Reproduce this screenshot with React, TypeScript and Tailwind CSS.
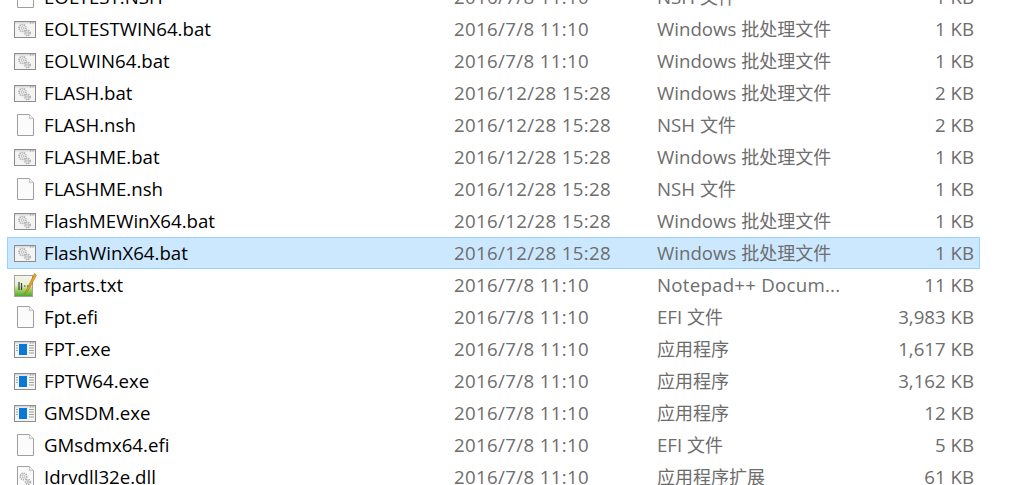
import React from "react";

type IconKind = "bat" | "file" | "exe" | "npp" | "dll";

interface FileRow {
  name: string;
  date: string;
  type: string;
  size: string;
  icon: IconKind;
  selected?: boolean;
}

const BAT = "Windows 批处理文件";

const rows: FileRow[] = [
  { name: "EOLTEST.NSH", date: "2016/7/8 11:10", type: "NSH 文件", size: "1 KB", icon: "file" },
  { name: "EOLTESTWIN64.bat", date: "2016/7/8 11:10", type: BAT, size: "1 KB", icon: "bat" },
  { name: "EOLWIN64.bat", date: "2016/7/8 11:10", type: BAT, size: "1 KB", icon: "bat" },
  { name: "FLASH.bat", date: "2016/12/28 15:28", type: BAT, size: "2 KB", icon: "bat" },
  { name: "FLASH.nsh", date: "2016/12/28 15:28", type: "NSH 文件", size: "2 KB", icon: "file" },
  { name: "FLASHME.bat", date: "2016/12/28 15:28", type: BAT, size: "1 KB", icon: "bat" },
  { name: "FLASHME.nsh", date: "2016/12/28 15:28", type: "NSH 文件", size: "1 KB", icon: "file" },
  { name: "FlashMEWinX64.bat", date: "2016/12/28 15:28", type: BAT, size: "1 KB", icon: "bat" },
  { name: "FlashWinX64.bat", date: "2016/12/28 15:28", type: BAT, size: "1 KB", icon: "bat", selected: true },
  { name: "fparts.txt", date: "2016/7/8 11:10", type: "Notepad++ Docum...", size: "11 KB", icon: "npp" },
  { name: "Fpt.efi", date: "2016/7/8 11:10", type: "EFI 文件", size: "3,983 KB", icon: "file" },
  { name: "FPT.exe", date: "2016/7/8 11:10", type: "应用程序", size: "1,617 KB", icon: "exe" },
  { name: "FPTW64.exe", date: "2016/7/8 11:10", type: "应用程序", size: "3,162 KB", icon: "exe" },
  { name: "GMSDM.exe", date: "2016/7/8 11:10", type: "应用程序", size: "12 KB", icon: "exe" },
  { name: "GMsdmx64.efi", date: "2016/7/8 11:10", type: "EFI 文件", size: "5 KB", icon: "file" },
  { name: "Idrvdll32e.dll", date: "2016/7/8 11:10", type: "应用程序扩展", size: "61 KB", icon: "dll" },
];

const Gear = ({ cx, cy, r }: { cx: number; cy: number; r: number }) => (
  <g>
    <circle cx={cx} cy={cy} r={r} fill="none" stroke="#adadad" strokeWidth="1.7" strokeDasharray="1.3 0.8" />
    <circle cx={cx} cy={cy} r={r * 0.4} fill="#f4f4f4" stroke="#a8a8a8" strokeWidth="0.7" />
  </g>
);

const Page = () => (
  <>
    <path d="M3.5 0.5H15.5L19.5 4.5V21.5H3.5Z" fill="#fbfbfb" stroke="#9e9e9e" />
    <path d="M15.5 0.5V4.5H19.5" fill="#efefef" stroke="#c4c4c4" />
  </>
);

const Window = () => (
  <>
    <rect x="0.5" y="3.5" width="21" height="16" fill="#f4f4f4" stroke="#8c8c8c" />
    <rect x="1" y="4" width="20" height="1.6" fill="#dcdcdc" />
    <rect x="16" y="4.2" width="1.2" height="1.2" fill="#9a9a9a" />
    <rect x="18.5" y="4.2" width="1.2" height="1.2" fill="#9a9a9a" />
  </>
);

const FileIcon = ({ kind }: { kind: IconKind }) => {
  if (kind === "file") {
    return (
      <svg width="22" height="22" viewBox="0 0 22 22">
        <Page />
      </svg>
    );
  }
  if (kind === "dll") {
    return (
      <svg width="22" height="22" viewBox="0 0 22 22">
        <Page />
        <Gear cx={9.5} cy={10.5} r={3.2} />
        <Gear cx={14} cy={16} r={2.4} />
      </svg>
    );
  }
  if (kind === "bat") {
    return (
      <svg width="22" height="22" viewBox="0 0 22 22">
        <Window />
        <Gear cx={8.5} cy={10} r={3.4} />
        <Gear cx={13.5} cy={15} r={2.6} />
      </svg>
    );
  }
  if (kind === "exe") {
    return (
      <svg width="22" height="22" viewBox="0 0 22 22">
        <Window />
        <rect x="5" y="6" width="8" height="11" fill="#0a78d7" />
        <path d="M2 7.5H4M2 10H4M2 12.5H4M15 7.5H20M15 10H20M15 12.5H20M15 15H20" stroke="#a0a0a0" strokeWidth="1" />
      </svg>
    );
  }
  return (
    <svg width="24" height="24" viewBox="0 0 24 24" className="-ml-[1px] shrink-0">
      <defs>
        <linearGradient id="npp" x1="0" y1="0" x2="0" y2="1">
          <stop offset="0" stopColor="#f6f6f0" />
          <stop offset="0.45" stopColor="#e6efd2" />
          <stop offset="0.7" stopColor="#9ed05f" />
          <stop offset="1" stopColor="#46a82c" />
        </linearGradient>
      </defs>
      <rect x="1.5" y="2.5" width="18" height="21" fill="url(#npp)" stroke="#a3a396" />
      <path d="M6 9V17M8.5 10V17M11 13H12.5M14 13H15.5" stroke="#3f3f3f" strokeWidth="1.2" />
      <path d="M21.5 0.5L13.5 17L11.5 21L15 18L23.5 2Z" fill="#eba81f" stroke="#a66c10" strokeWidth="0.6" />
    </svg>
  );
};

// the CJK part of a type name runs a little narrower than the latin part
const TypeName = ({ text }: { text: string }) => (
  <>
    {text.split(/([\u4e00-\u9fff]+)/).map((part, i) =>
      i % 2 === 1 ? (
        <span key={i} className="text-[18px]">
          {part}
        </span>
      ) : (
        <span key={i}>{part}</span>
      ),
    )}
  </>
);

export default function App() {
  return (
    <div className="h-[485px] w-[1035px] overflow-hidden bg-white font-['Open_Sans','Noto_Sans_CJK_SC',sans-serif] text-[18.67px]">
      <div className="-mt-[19px] flex flex-col pl-[7px]">
        {rows.map((row) => (
          <div
            key={row.name}
            className={`box-border flex h-[32px] w-[973px] items-center border ${
              row.selected ? "border-[#99d1ff] bg-[#cce8ff]" : "border-transparent"
            }`}
          >
            <div className="ml-[6px] flex w-[24px] shrink-0 items-center">
              <FileIcon kind={row.icon} />
            </div>
            <div className="ml-[6px] w-[410px] shrink-0 whitespace-nowrap text-black">{row.name}</div>
            <div className="w-[203px] shrink-0 whitespace-nowrap tracking-[0.35px] text-[#6d6d6d]">{row.date}</div>
            <div
              className={`w-[200px] shrink-0 whitespace-nowrap text-[#6d6d6d] ${
                row.icon === "npp" ? "tracking-[0.25px]" : ""
              }`}
            >
              <TypeName text={row.type} />
            </div>
            <div className="w-[117px] shrink-0 whitespace-nowrap text-right text-[#6d6d6d]">{row.size}</div>
          </div>
        ))}
      </div>
    </div>
  );
}
